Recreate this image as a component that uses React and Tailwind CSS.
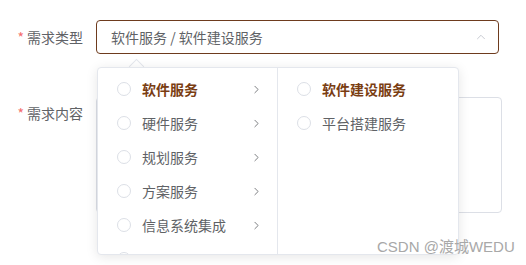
import { ChevronRight, ChevronUp } from 'lucide-react';

const leftItems = ['软件服务', '硬件服务', '规划服务', '方案服务', '信息系统集成'];
const rightItems = ['软件建设服务', '平台搭建服务'];

function Radio() {
  return <span className="h-[14px] w-[14px] shrink-0 rounded-full border border-[#dcdfe6] bg-white" />;
}

function Label({ text }) {
  return (
    <div className="flex w-[96px] shrink-0 justify-end pr-[13px] text-[14px] text-[#606266]">
      <span className="mr-[3px] text-[#f56c6c]">*</span>
      {text}
    </div>
  );
}

export default function App() {
  return (
    <div
      className="relative h-[265px] w-[526px] overflow-hidden bg-white"
      style={{ fontFamily: '"Noto Sans CJK SC", "Liberation Sans", sans-serif' }}
    >
      <div className="pt-[20px]">
        <div className="flex h-[34px] items-center">
          <Label text="需求类型" />
          <div className="relative flex h-[34px] w-[403px] items-center justify-between rounded-[4px] border border-[#6e3b1e] pl-[14px] pr-[10px]">
            <span className="text-[14px] text-[#606266]">软件服务 / 软件建设服务</span>
            <ChevronUp size={14} strokeWidth={1.5} className="text-[#c0c4cc]" />

            <div className="absolute left-0 top-[46px] z-10">
              <div className="absolute left-[34px] top-[-6px] h-[11px] w-[11px] rotate-45 border-l border-t border-[#e4e7ed] bg-white" />
              <div className="relative flex h-[188px] rounded-[4px] border border-[#e4e7ed] bg-white shadow-[0_2px_12px_0_rgba(0,0,0,0.1)]">
                <ul className="w-[180px] overflow-hidden border-r border-[#e4e7ed] pt-[4px]">
                  {leftItems.map((item, i) => (
                    <li key={item} className="flex h-[34px] items-center pl-[19px] pr-[14px]">
                      <Radio />
                      <span
                        className={`ml-[11px] flex-1 text-[14px] ${
                          i === 0 ? 'font-bold text-[#7a3d12]' : 'text-[#606266]'
                        }`}
                      >
                        {item}
                      </span>
                      <ChevronRight size={13} strokeWidth={1.5} className="text-[#606266]" />
                    </li>
                  ))}
                  <li className="flex h-[34px] items-center pl-[19px]">
                    <Radio />
                  </li>
                </ul>
                <ul className="w-[180px] pt-[4px]">
                  {rightItems.map((item, i) => (
                    <li key={item} className="flex h-[34px] items-center pl-[19px]">
                      <Radio />
                      <span
                        className={`ml-[11px] text-[14px] ${
                          i === 0 ? 'font-bold text-[#7a3d12]' : 'text-[#606266]'
                        }`}
                      >
                        {item}
                      </span>
                    </li>
                  ))}
                </ul>
              </div>
            </div>
          </div>
        </div>

        <div className="mt-[43px] flex">
          <div className="pt-[6px]">
            <Label text="需求内容" />
          </div>
          <div className="h-[116px] w-[406px] rounded-[4px] border border-[#dcdfe6]" />
        </div>
      </div>

      <div
        className="absolute left-[377px] top-[236px] z-20 text-[15px] text-[#a8a8a8]"
        style={{ fontFamily: '"Liberation Sans", "Noto Sans CJK SC", sans-serif' }}
      >
        CSDN @渡城WEDU
      </div>
    </div>
  );
}
